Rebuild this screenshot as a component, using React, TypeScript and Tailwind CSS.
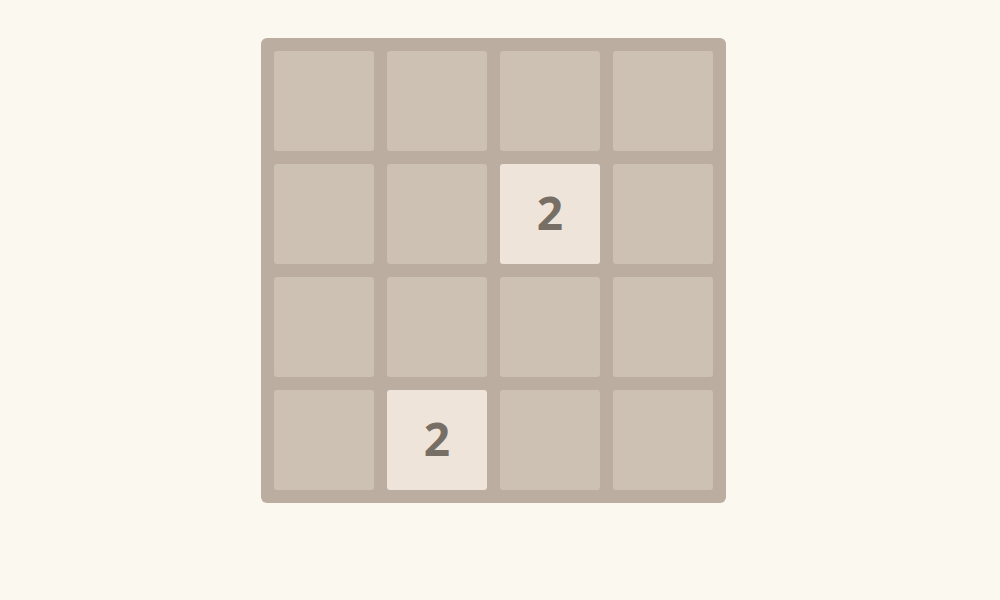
import React from "react";

const grid = [
  [0, 0, 0, 0],
  [0, 0, 2, 0],
  [0, 0, 0, 0],
  [0, 2, 0, 0],
];

export default function App() {
  return (
    <div className="w-[1000px] h-[600px] bg-[#faf8ef] pt-[38px] pl-[261px]">
      <div className="w-[465px] h-[465px] bg-[#bbada0] rounded-[6px] p-[13px] grid grid-cols-4 grid-rows-4 gap-[13px]">
        {grid.flat().map((v, i) =>
          v ? (
            <div
              key={i}
              className="rounded-[3px] bg-[#eee4da] flex items-center justify-center text-[#776e65] font-bold text-[46px] leading-none pb-[4px]"
              style={{ fontFamily: '"Open Sans", sans-serif' }}
            >
              {v}
            </div>
          ) : (
            <div key={i} className="rounded-[3px] bg-[#cdc1b4]" />
          )
        )}
      </div>
    </div>
  );
}
